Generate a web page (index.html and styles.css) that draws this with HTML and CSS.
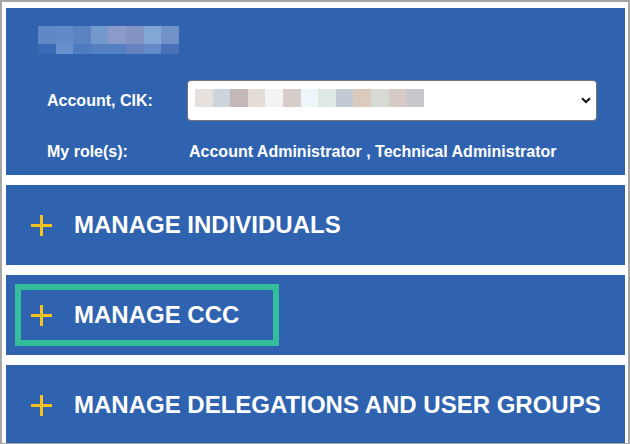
FILE: index.html
```html
<!DOCTYPE html>
<html lang="en">
<head>
<meta charset="utf-8">
<title>Account</title>
<link rel="stylesheet" href="styles.css">
</head>
<body>
<div class="frame">
  <section class="panel header">
    <div class="name-blur">
      <i class="c1"></i><i class="c2"></i><i class="c3"></i><i class="c4"></i><i class="c5"></i><i class="c6"></i><i class="c7"></i><i class="c8"></i>
      <i class="d1"></i><i class="d2"></i><i class="d3"></i><i class="d4"></i><i class="d5"></i><i class="d6"></i><i class="d7"></i><i class="d8"></i>
    </div>
    <div class="details">
      <div class="label">Account, CIK:</div>
      <div class="select" role="combobox" aria-label="Account, CIK">
        <div class="sel-blur">
          <i class="s1"></i><i class="s2"></i><i class="s3"></i><i class="s4"></i><i class="s5"></i><i class="s6"></i><i class="s7"></i><i class="s8"></i><i class="s9"></i><i class="s10"></i><i class="s11"></i><i class="s12"></i><i class="s13"></i>
        </div>
        <svg class="chev" width="10" height="7" viewBox="0 0 10 7"><path d="M1 1.2 L5 5 L9 1.2" fill="none" stroke="#111" stroke-width="2"/></svg>
      </div>
      <div class="label">My role(s):</div>
      <div class="value">Account Administrator , Technical Administrator</div>
    </div>
  </section>

  <section class="panel acc">
    <div class="acc-head">
      <svg class="plus" width="21" height="21" viewBox="0 0 21 21"><rect x="0" y="9" width="21" height="3" fill="#f7c21e"/><rect x="9" y="0" width="3" height="21" fill="#f7c21e"/></svg>
      <span class="acc-title">MANAGE INDIVIDUALS</span>
    </div>
  </section>

  <section class="panel acc">
    <div class="acc-head focused">
      <svg class="plus" width="21" height="21" viewBox="0 0 21 21"><rect x="0" y="9" width="21" height="3" fill="#f7c21e"/><rect x="9" y="0" width="3" height="21" fill="#f7c21e"/></svg>
      <span class="acc-title">MANAGE CCC</span>
    </div>
  </section>

  <section class="panel acc">
    <div class="acc-head">
      <svg class="plus" width="21" height="21" viewBox="0 0 21 21"><rect x="0" y="9" width="21" height="3" fill="#f7c21e"/><rect x="9" y="0" width="3" height="21" fill="#f7c21e"/></svg>
      <span class="acc-title">MANAGE DELEGATIONS AND USER GROUPS</span>
    </div>
  </section>
</div>
</body>
</html>
```

FILE: styles.css
```css
html, body {
  margin: 0;
  padding: 0;
  background: #ffffff;
}

.frame {
  width: 630px;
  height: 444px;
  box-sizing: border-box;
  border: 2px solid #a6a6a6;
  border-bottom-width: 1px;
  padding: 6px 3px 0 4px;
  overflow: hidden;
  display: flex;
  flex-direction: column;
  gap: 10px;
  background: #ffffff;
  font-family: "Liberation Sans", Arial, sans-serif;
  color: #ffffff;
}

.panel {
  background: #2f63b0;
  flex: 0 0 auto;
}

.header {
  height: 167px;
  box-sizing: border-box;
  padding: 18px 0 0 32px;
}

.name-blur {
  display: grid;
  grid-template-columns: repeat(8, 17.6px);
  grid-template-rows: 18px 10px;
}

.name-blur i { display: block; }
.c1 { background: #6088c4; }
.c2 { background: #628ac8; }
.c3 { background: #5b83c0; }
.c4 { background: #7399cc; }
.c5 { background: #8a9acb; }
.c6 { background: #8394c4; }
.c7 { background: #82a6d6; }
.c8 { background: #7092c8; }
.d1 { background: #3a6bb6; }
.d2 { background: #6890cc; }
.d3 { background: #4e7bc0; }
.d4 { background: #5580c2; }
.d5 { background: #5380c0; }
.d6 { background: #6683bf; }
.d7 { background: #628bc8; }
.d8 { background: #4a70b8; }

.details {
  margin: 26px 0 0 9px;
  display: grid;
  grid-template-columns: 140px 410px;
  grid-template-rows: 41px 18px;
  row-gap: 22px;
  align-items: center;
  font-size: 16px;
  font-weight: bold;
  line-height: 18px;
}

.value {
  padding-left: 2px;
}

.select {
  height: 41px;
  box-sizing: border-box;
  background: #ffffff;
  border: 1px solid #767676;
  border-radius: 4px;
  display: flex;
  align-items: flex-start;
  justify-content: space-between;
  padding: 8px 5px 0 7px;
}

.sel-blur {
  display: flex;
  height: 18px;
}

.sel-blur i {
  display: block;
  width: 17.6px;
  height: 18px;
}
.s1 { background: #e6e1dc; }
.s2 { background: #ccd4dc; }
.s3 { background: #c4b7b7; }
.s4 { background: #e3ddd6; }
.s5 { background: #f3f3f3; }
.s6 { background: #d6ccc9; }
.s7 { background: #eef6fc; }
.s8 { background: #e0e8e4; }
.s9 { background: #c2cad4; }
.s10 { background: #dccbbd; }
.s11 { background: #d8dad6; }
.s12 { background: #d6cac4; }
.s13 { background: #c8c8cc; }

.chev {
  align-self: center;
  margin-top: -8px;
}

.acc {
  height: 80px;
  box-sizing: border-box;
  padding: 9px;
}

.acc-head {
  height: 62px;
  width: fit-content;
  box-sizing: border-box;
  border: 6px solid transparent;
  padding: 0 34px 0 10px;
  display: flex;
  align-items: center;
  gap: 22px;
}

.acc-head.focused {
  border-color: #35be9c;
}

.plus {
  flex: 0 0 auto;
  display: block;
}

.acc-title {
  font-size: 24px;
  font-weight: bold;
  line-height: 28px;
  white-space: nowrap;
}
```
